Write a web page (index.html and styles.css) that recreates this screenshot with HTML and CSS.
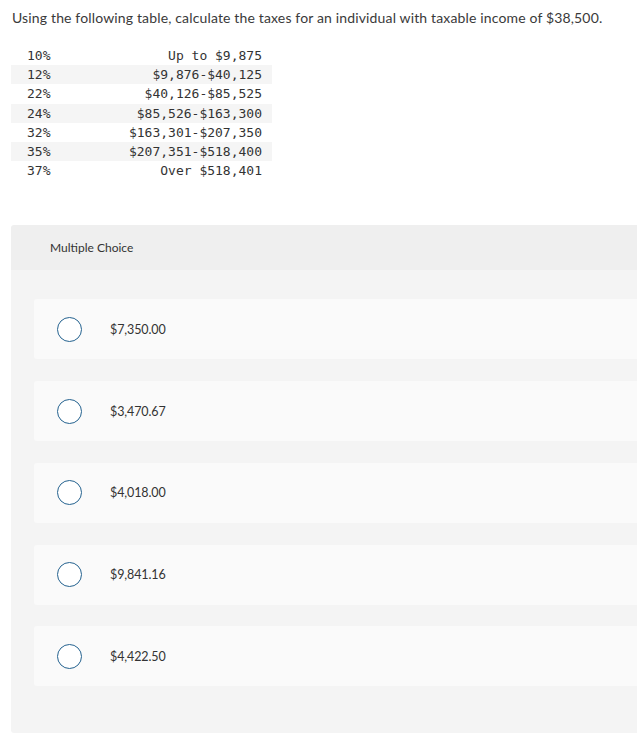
FILE: index.html
```html
<!DOCTYPE html>
<html lang="en">
<head>
<meta charset="utf-8">
<title>Multiple Choice</title>
<link rel="stylesheet" href="styles.css">
</head>
<body>
<div class="question">
  <p class="prompt">Using the following table, calculate the taxes for an individual with taxable income of $38,500.</p>
  <table class="brackets">
    <tbody>
      <tr><td class="rate">10%</td><td class="range">Up to $9,875</td></tr>
      <tr class="alt"><td class="rate">12%</td><td class="range">$9,876-$40,125</td></tr>
      <tr><td class="rate">22%</td><td class="range">$40,126-$85,525</td></tr>
      <tr class="alt"><td class="rate">24%</td><td class="range">$85,526-$163,300</td></tr>
      <tr><td class="rate">32%</td><td class="range">$163,301-$207,350</td></tr>
      <tr class="alt"><td class="rate">35%</td><td class="range">$207,351-$518,400</td></tr>
      <tr><td class="rate">37%</td><td class="range">Over $518,401</td></tr>
    </tbody>
  </table>
  <section class="panel">
    <header class="panel-head">Multiple Choice</header>
    <div class="panel-body">
      <label class="choice"><span class="radio"></span><span class="answer">$7,350.00</span></label>
      <label class="choice"><span class="radio"></span><span class="answer">$3,470.67</span></label>
      <label class="choice"><span class="radio"></span><span class="answer">$4,018.00</span></label>
      <label class="choice"><span class="radio"></span><span class="answer">$9,841.16</span></label>
      <label class="choice"><span class="radio"></span><span class="answer">$4,422.50</span></label>
    </div>
  </section>
</div>
</body>
</html>
```

FILE: styles.css
```css
html, body {
  margin: 0;
  padding: 0;
  background: #ffffff;
  overflow-x: hidden;
}

body {
  font-family: "Lato", "Liberation Sans", sans-serif;
  color: #333333;
}

.question {
  padding: 8px 0 0 11px;
}

.prompt {
  margin: 0 0 0 1px;
  font-size: 14px;
  line-height: 20px;
  letter-spacing: 0.15px;
  color: #3a3a3a;
}

.brackets {
  margin-top: 18px;
  border-collapse: collapse;
  width: 261px;
  font-family: "DejaVu Sans Mono", "Liberation Mono", monospace;
  font-size: 13px;
  color: #333333;
}

.brackets td {
  padding: 0;
  height: 19.2px;
  line-height: 19.2px;
}

.brackets .rate {
  padding-left: 16px;
  text-align: left;
}

.brackets .range {
  padding-right: 10px;
  text-align: right;
}

.brackets tr.alt {
  background: #f5f5f5;
}

.panel {
  margin-top: 45px;
  border-radius: 3px 0 0 3px;
  overflow: hidden;
}

.panel-head {
  height: 45px;
  display: flex;
  align-items: center;
  padding-left: 39px;
  background: #efefef;
  font-size: 12px;
  color: #333333;
}

.panel-body {
  background: #f4f4f4;
  padding: 29px 0 47px 23px;
  display: flex;
  flex-direction: column;
  gap: 21.75px;
}

.choice {
  height: 60px;
  display: flex;
  align-items: center;
  background: #fafafa;
  border-radius: 3px 0 0 3px;
  padding-left: 23px;
}

.radio {
  box-sizing: border-box;
  width: 25px;
  height: 25px;
  border: 1.5px solid #24628f;
  border-radius: 50%;
  background: #ffffff;
  flex: none;
}

.answer {
  margin-left: 28px;
  font-size: 12.5px;
  letter-spacing: -0.1px;
  color: #333333;
}
```
